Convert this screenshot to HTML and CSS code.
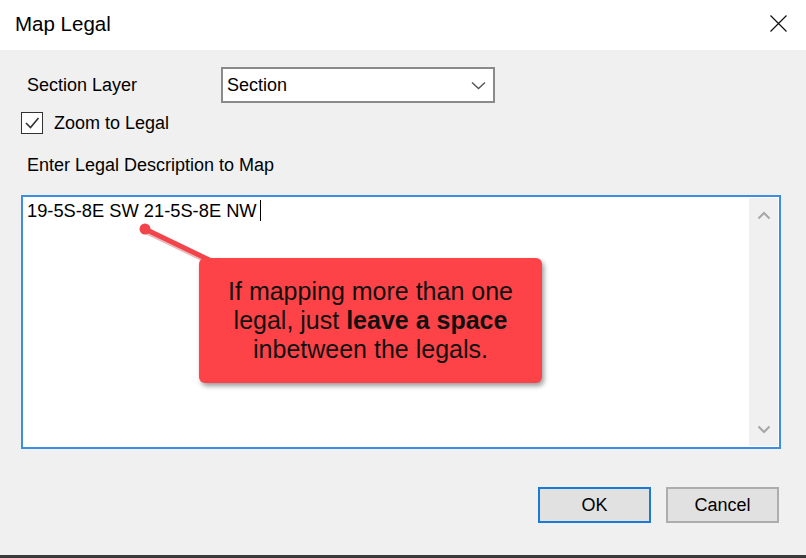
FILE: index.html
```html
<!DOCTYPE html>
<html lang="en">
<head>
  <meta charset="UTF-8" />
  <title>Map Legal</title>
  <link rel="stylesheet" href="styles.css">
</head>
<body>
  <div class="dialog">
    <!-- Title bar -->
    <div class="titlebar">
      <span class="title">Map Legal</span>
      <svg class="close" width="17" height="17" viewBox="0 0 17 17">
        <path d="M0.5 0.5 L16.5 16.5 M16.5 0.5 L0.5 16.5" stroke="#111" stroke-width="1.2" fill="none" />
      </svg>
    </div>

    <!-- Form -->
    <div class="content">
      <div class="layer-row">
        <span class="label layer-label">Section Layer</span>
        <div class="combo">
          <span>Section</span>
          <svg class="combo-arrow" width="15" height="9" viewBox="0 0 15 9">
            <path d="M1 1.5 L7.5 7.5 L14 1.5" stroke="#555" stroke-width="1.4" fill="none" />
          </svg>
        </div>
      </div>

      <div class="check-row">
        <span class="checkbox">
          <svg width="18" height="18" viewBox="0 0 18 18">
            <path d="M3 9 L7.5 13.5 L15.5 4" stroke="#333" stroke-width="1.6" fill="none" />
          </svg>
        </span>
        <span class="label">Zoom to Legal</span>
      </div>

      <div class="label desc-label">Enter Legal Description to Map</div>

      <div class="textbox">
        <div class="text">19-5S-8E SW 21-5S-8E NW<span class="caret"></span></div>
        <div class="scrollbar">
          <svg width="14" height="9" viewBox="0 0 14 9">
            <path d="M1.5 7.5 L7 2 L12.5 7.5" stroke="#a6a6a6" stroke-width="2" fill="none" />
          </svg>
          <svg width="14" height="9" viewBox="0 0 14 9">
            <path d="M1.5 1.5 L7 7 L12.5 1.5" stroke="#a6a6a6" stroke-width="2" fill="none" />
          </svg>
        </div>

        <!-- annotation -->
        <svg class="pointer" width="240" height="100" viewBox="0 0 240 100">
          <line x1="122" y1="32" x2="205" y2="72" stroke="#c43a3e" stroke-width="6" stroke-linecap="round" opacity="0.35" transform="translate(1,2)" />
          <line x1="122" y1="32" x2="205" y2="72" stroke="#f2454b" stroke-width="5" stroke-linecap="round" />
          <circle cx="122" cy="32" r="5.5" fill="#f2454b" />
        </svg>
        <div class="callout">
          If mapping more than one<br>
          legal, just <b>leave a space</b><br>
          inbetween the legals.
        </div>
      </div>

      <div class="buttons">
        <button class="btn primary">OK</button>
        <button class="btn">Cancel</button>
      </div>
    </div>

    <div class="bottom-edge"></div>
  </div>
</body>
</html>
```

FILE: styles.css
```css
body {
  margin: 0;
  font-family: "Liberation Sans", Arial, sans-serif;
  color: #000;
}

.dialog {
  width: 806px;
  height: 558px;
  background: #f0f0f0;
  display: flex;
  flex-direction: column;
  overflow: hidden;
}

.titlebar {
  height: 50px;
  background: #fff;
  display: flex;
  align-items: center;
  justify-content: space-between;
  padding: 0 19px 0 15px;
  flex-shrink: 0;
}

.title {
  font-size: 20.5px;
  margin-top: -2px;
}

.close {
  margin-top: -3px;
}

.content {
  flex: 1;
  display: flex;
  flex-direction: column;
  padding: 0 25px 0 21px;
}

.label {
  font-size: 18px;
  line-height: 22px;
}

.layer-row {
  margin-top: 17px;
  height: 36px;
  display: flex;
  align-items: center;
}

.layer-label {
  width: 194px;
  padding-left: 6px;
}

.combo {
  box-sizing: border-box;
  width: 274px;
  height: 36px;
  border: 2px solid #8a8a8a;
  background: #fff;
  display: flex;
  align-items: center;
  justify-content: space-between;
  padding: 0 7px 0 4px;
  font-size: 18px;
}

.combo-arrow {
  margin-top: 1px;
}

.check-row {
  margin-top: 9px;
  height: 22px;
  display: flex;
  align-items: center;
  gap: 11px;
}

.checkbox {
  width: 20px;
  height: 20px;
  border: 1.5px solid #333;
  background: #fff;
  display: flex;
  align-items: center;
  justify-content: center;
}

.desc-label {
  margin-top: 20px;
  padding-left: 6px;
}

.textbox {
  position: relative;
  margin-top: 19px;
  height: 250px;
  border: 2px solid #3b8ee4;
  background: #fff;
  display: flex;
}

.text {
  flex: 1;
  font-size: 18.3px;
  line-height: 22px;
  padding: 3px 0 0 4px;
}

.caret {
  display: inline-block;
  width: 1.5px;
  height: 21px;
  background: #000;
  margin-left: 3px;
  vertical-align: -4px;
}

.scrollbar {
  width: 29px;
  margin: 1px 1px 1px 0;
  background: #f0f0f0;
  display: flex;
  flex-direction: column;
  justify-content: space-between;
  align-items: center;
  padding: 13px 0 12px;
}

.pointer {
  position: absolute;
  left: 0;
  top: 0;
}

.callout {
  position: absolute;
  left: 176px;
  top: 61px;
  width: 343px;
  height: 125px;
  box-sizing: border-box;
  padding-top: 19px;
  background: #fd4347;
  border-radius: 6px;
  box-shadow: 2px 3px 5px rgba(0, 0, 0, 0.4);
  text-align: center;
  font-size: 25px;
  line-height: 29px;
  color: #111;
}

.buttons {
  margin-top: 38px;
  margin-right: 2px;
  display: flex;
  justify-content: flex-end;
  gap: 15px;
}

.btn {
  width: 113px;
  height: 36px;
  background: #e1e1e1;
  border: 2px solid #adadad;
  font-family: "Liberation Sans", Arial, sans-serif;
  font-size: 18px;
  color: #000;
  padding: 0;
}

.primary {
  border-color: #1a7bd6;
}

.bottom-edge {
  height: 3px;
  background: #3a3a3a;
  flex-shrink: 0;
}
```
